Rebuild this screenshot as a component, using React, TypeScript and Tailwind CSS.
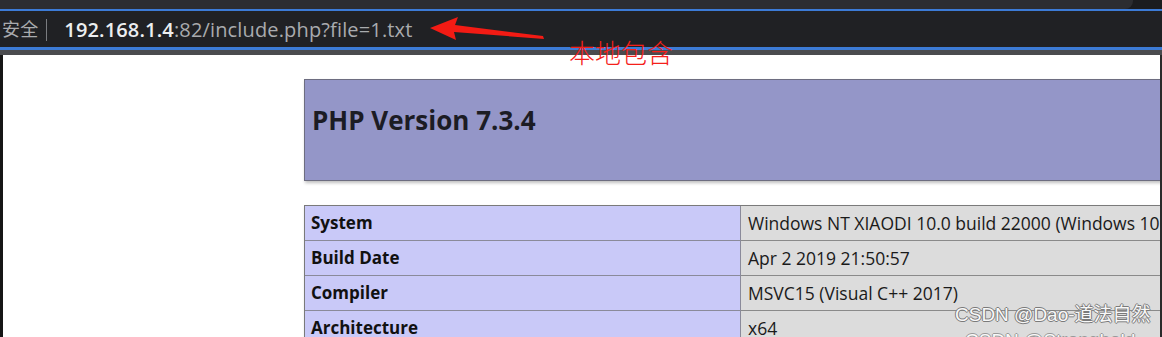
const rows = [
  { label: "System", value: "Windows NT XIAODI 10.0 build 22000 (Windows 10 Home Edition) AMD64" },
  { label: "Build Date", value: "Apr 2 2019 21:50:57" },
  { label: "Compiler", value: "MSVC15 (Visual C++ 2017)" },
  { label: "Architecture", value: "x64" },
];

function Arrow() {
  return (
    <svg width="120" height="26" viewBox="0 0 120 26" className="absolute left-[428px] top-[16px]">
      <path d="M2 12 L30 1 L27 9 L115 20 L116 23 L26 16 L28 24 Z" fill="#f31b14" />
    </svg>
  );
}

export default function App() {
  return (
    <div className="relative w-[1162px] h-[337px] overflow-hidden bg-[#202124] flex flex-col font-['Open_Sans','Noto_Sans_CJK_SC',sans-serif]">
      {/* browser chrome */}
      <div className="h-[9px] bg-[#1b1c1f] flex">
        <div className="w-[1133px] bg-[#2c2d31] rounded-br-[8px]" />
      </div>
      <div className="h-[2px] bg-[#3c7bd6]" />
      <div className="h-[36px] bg-[#202124] flex items-center pl-[2px] pt-[1px] text-[20px] tracking-[0.15px]">
        <span className="text-[#a9abae] text-[18px]">安全</span>
        <span className="mx-[8px] h-[22px] w-[1px] bg-[#7a7c80]" />
        <span className="ml-[9px] font-semibold text-[#eceef0]">192.168.1.4</span>
        <span className="text-[#a9abae]">:82/include.php?file=1.txt</span>
      </div>
      <div className="h-[3px] bg-[#3c7bd6]" />
      <div className="h-[5px] bg-[#4a4b4e]" />

      {/* page */}
      <div className="flex-1 flex min-h-0">
        <div className="w-[3px] bg-[#151515]" />
        <div className="flex-1 bg-white overflow-hidden pl-[301px] pt-[24px]">
          <div className="w-[900px] h-[102px] bg-[#9496c8] border border-[#6d6d80] shadow-[1px_2px_3px_rgba(0,0,0,0.25)] flex items-center pl-[7px] pb-[20px]">
            <h1 className="text-[26px] font-bold text-[#1c1c24]">PHP Version 7.3.4</h1>
          </div>
          <div className="mt-[24px] w-[900px] grid grid-cols-[436px_464px] border border-[#7a7a7a] shadow-[1px_2px_3px_rgba(0,0,0,0.2)]">
            {rows.map((r) => (
              <div key={r.label} className="contents">
                <div className="h-[35px] bg-[#c9c9f8] border-b border-r border-[#8a8a9a] flex items-center pl-[6px] text-[17px] font-bold text-[#111] whitespace-nowrap">
                  {r.label}
                </div>
                <div className="h-[35px] bg-[#dcdcdc] border-b border-[#8a8a8a] flex items-center pl-[7px] text-[17.5px] text-[#1a1a1a] whitespace-nowrap overflow-hidden">
                  {r.value}
                </div>
              </div>
            ))}
          </div>
        </div>
        <div className="w-[2px] bg-[#2a2a2a]" />
      </div>

      {/* annotations */}
      <Arrow />
      <div className="absolute left-[569px] top-[39px] text-[26px] font-light leading-none text-[#f5201a] font-['Noto_Sans_CJK_SC',sans-serif]">
        本地包含
      </div>
      <div className="absolute left-[955px] top-[305px] text-[19px] leading-none text-[#f8f8f8] font-['Liberation_Sans','Noto_Sans_CJK_SC',sans-serif] [text-shadow:1px_0_0_#7a7a7a,-1px_0_0_#7a7a7a,0_1px_0_#7a7a7a,0_-1px_0_#7a7a7a]">
        CSDN @Dao-道法自然
      </div>
      <div className="absolute left-[965px] top-[331px] text-[19px] leading-none text-[#f8f8f8] font-['Liberation_Sans','Noto_Sans_CJK_SC',sans-serif] [text-shadow:1px_0_0_#9a9a9a,-1px_0_0_#9a9a9a,0_1px_0_#9a9a9a,0_-1px_0_#9a9a9a]">
        CSDN @Stronghold
      </div>
    </div>
  );
}
